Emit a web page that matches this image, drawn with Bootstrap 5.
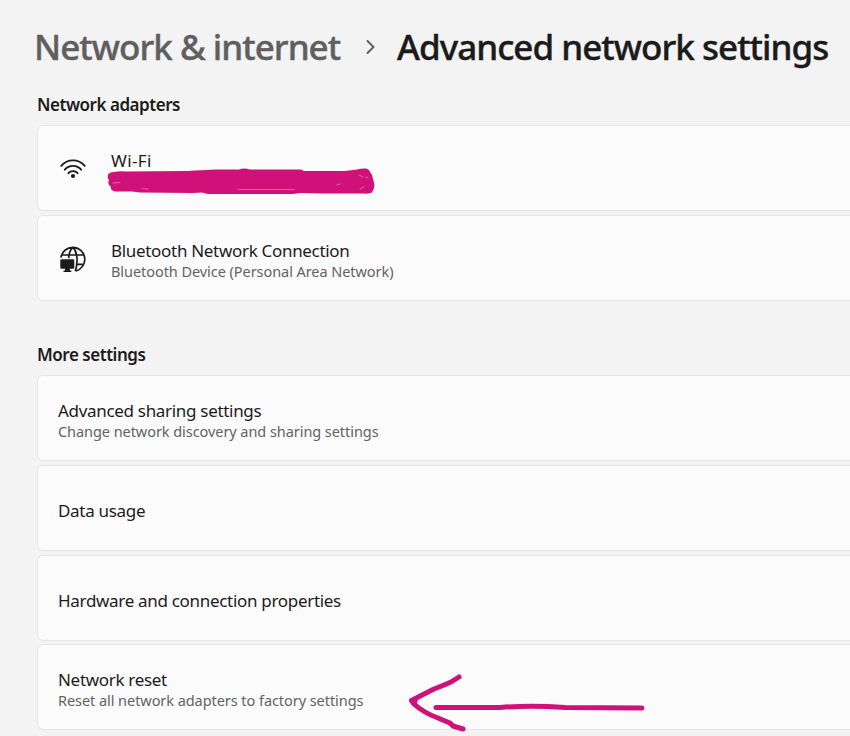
<!DOCTYPE html>
<html lang="en">
<head>
<meta charset="utf-8">
<meta name="viewport" content="width=device-width, initial-scale=1">
<title>Advanced network settings</title>
<link href="https://cdn.jsdelivr.net/npm/bootstrap@5.3.0/dist/css/bootstrap.min.css" rel="stylesheet">
<style>
  body { background: #f3f3f3; color: #1b1b1b; font-family: "Segoe UI", "Noto Sans", "Open Sans", sans-serif; height: 736px; }
  .page { padding: 24px 0 0 37px; height: 736px; }
  .crumbs { height: 45px; font-size: 35px; line-height: 45px; font-weight: 500; -webkit-text-stroke: .4px; white-space: nowrap; margin-left: -3px; }
  .crumb-parent { color: #5f5f5f; width: 307px; letter-spacing: -.98px; }
  .crumb-sep { width: 10px; margin: 0 22px 0 24px; }
  .crumb-current { letter-spacing: -.98px; }
  .group-title { font-size: 17px; line-height: 24px; font-weight: 600; letter-spacing: -.47px; }
  .setting { height: 86px; background: #fbfbfb; border: 1px solid #e5e5e5; border-right: 0; border-radius: 6px 0 0 6px; padding-left: 20px; white-space: nowrap; }
  .setting-last { margin-top: -1px; }
  .setting-icon { width: 30px; height: 30px; margin-right: 23px; flex: none; }
  .label { font-size: 17px; line-height: 20px; letter-spacing: -.31px; }
  .label-short { letter-spacing: .4px; }
  .desc { font-size: 14.5px; line-height: 20px; letter-spacing: -.06px; color: #636363; }
  .setting-text { padding-top: 5px; }
  .more { margin-top: 42px; }
  .scribble { left: 0; top: 0; pointer-events: none; }
</style>
</head>
<body class="overflow-hidden position-relative">
<main class="page overflow-hidden">
  <nav class="crumbs d-flex align-items-center" aria-label="Breadcrumb">
    <div class="crumb-parent"><span>Network &amp; internet</span></div>
    <svg class="crumb-sep" viewBox="0 0 10 16" height="16" fill="none" stroke="#5f5f5f" stroke-width="2" stroke-linecap="round" stroke-linejoin="round"><path d="M2.500 2l6 6-6 6"/></svg>
    <div class="crumb-current"><span>Advanced network settings</span></div>
  </nav>

  <section>
    <div class="group-title mb-2 pt-4"><span>Network adapters</span></div>
    <div class="d-grid gap-1">
      <div class="setting d-flex align-items-center">
        <svg class="setting-icon" viewBox="0 0 30 30" fill="none" stroke="#1b1b1b" stroke-width="1.8" stroke-linecap="round"><path d="M3.200 12.900A15.500 15.500 0 0 1 26.800 12.900M6.800 16.700A10.700 10.700 0 0 1 23.200 16.700M10.300 20.200A6.300 6.300 0 0 1 19.700 20.200"/><circle cx="15" cy="23" r="2.100" fill="#1b1b1b" stroke="none"/></svg>
        <div class="setting-text"><div class="label label-short">Wi-Fi</div><div class="desc">&nbsp;</div></div>
      </div>
      <div class="setting d-flex align-items-center">
        <svg class="setting-icon mt-1" viewBox="0 0 30 30" fill="none" stroke="#1b1b1b" stroke-width="1.7"><path d="M2.900 12.600A12 12 0 1 1 17.800 26M4 10H26M18 19.300H26M15 2.400C11.800 5.100 10.900 8.600 10.700 13.100M15 2.400Q18.600 6 19.100 14.500Q19 21.500 17.300 26.200"/><path d="M3.600 14.200H15A1.300 1.300 0 0 1 16.300 15.500V22.500A1.300 1.300 0 0 1 15 23.800H11.800V25.600H13.300V27.100H5.500V25.600H7V23.800H3.600A1.300 1.300 0 0 1 2.300 22.500V15.500A1.300 1.300 0 0 1 3.600 14.200Z" fill="#1b1b1b" stroke="none"/></svg>
        <div class="setting-text"><div class="label">Bluetooth Network Connection</div><div class="desc">Bluetooth Device (Personal Area Network)</div></div>
      </div>
    </div>
  </section>

  <section class="more">
    <div class="group-title mb-2"><span>More settings</span></div>
    <div class="d-grid gap-1">
      <div class="setting d-flex align-items-center">
        <div class="setting-text"><div class="label">Advanced sharing settings</div><div class="desc">Change network discovery and sharing settings</div></div>
      </div>
      <div class="setting d-flex align-items-center"><div class="label setting-text">Data usage</div></div>
      <div class="setting d-flex align-items-center"><div class="label setting-text">Hardware and connection properties</div></div>
      <div class="setting setting-last d-flex align-items-center">
        <div class="setting-text"><div class="label">Network reset</div><div class="desc">Reset all network adapters to factory settings</div></div>
      </div>
    </div>
  </section>
</main>

<!-- Freehand marker strokes laid over the page -->
<svg class="scribble position-absolute" width="850" height="736" viewBox="0 0 850 736" fill="none" stroke="#d01179" stroke-linecap="round" stroke-linejoin="round" aria-hidden="true">
  <path fill="#d01179" stroke="none" d="M108 175Q109 172 114 172Q119 171 125 171.500L187 171L195 170.500L207 170L215 169.500H239Q244 167.500 250 169.500L301 169.500L304 171L345 171L357 169.500Q361 168.500 364 168.500Q369 168 370 172Q373 175 373 179L374.500 185Q374 190 372 192.500Q369 194 364 193.500H324L300 193L293 194H208L202 192.500L193 193L140 192.500L132 191.500L115 191.500Q110 190 111 187Q107 184 109 180Q107 178 108 175Z"/>
  <path stroke="#f0a0cc" stroke-width=".6" d="M238 189.500H294M142 188.500l6 .5M359 175l4 2M366 177l2 1M337 185l3-1M360 189l4-2M113 183l7-.5"/>
  <path stroke-width="5" d="M459 677L451 682Q442 686 434 689Q424 694 411.500 700.500L414 704Q424 713 438 718L450 723L453 726L463 729"/>
  <path fill="#d01179" stroke="none" d="M409 700L418 697L417 705L413 704Z"/>
  <path stroke-width="5" d="M436 707.500H500Q530 705 565 707.500L642 708"/>
</svg>
<script src="https://cdn.jsdelivr.net/npm/bootstrap@5.3.0/dist/js/bootstrap.bundle.min.js"></script>
</body>
</html>
